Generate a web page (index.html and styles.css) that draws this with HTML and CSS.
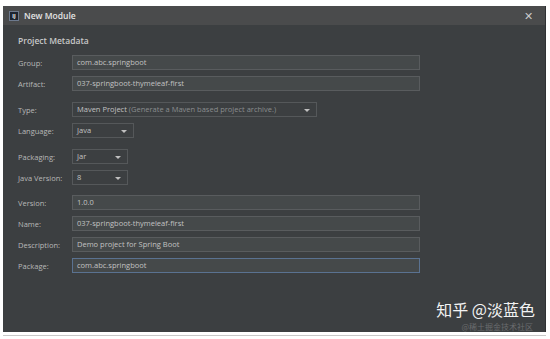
FILE: index.html
```html
<!DOCTYPE html>
<html lang="en">
<head>
    <meta charset="UTF-8">
    <title>New Module</title>
    <link rel="stylesheet" href="styles.css">
</head>
<body>
    <div class="dialog">
        <div class="titlebar">
            <span class="app-icon">IJ</span>
            <span class="title">New Module</span>
            <span class="close">&#x2715;</span>
        </div>
        <div class="content">
            <h2>Project Metadata</h2>
            <div class="row">
                <label>Group:</label>
                <div class="field wide">com.abc.springboot</div>
            </div>
            <div class="row">
                <label>Artifact:</label>
                <div class="field wide">037-springboot-thymeleaf-first</div>
            </div>
            <div class="row gap">
                <label>Type:</label>
                <div class="combo type">Maven Project <span class="hint">(Generate a Maven based project archive.)</span><span class="arrow"></span></div>
            </div>
            <div class="row">
                <label>Language:</label>
                <div class="combo lang">Java<span class="arrow"></span></div>
            </div>
            <div class="row gap">
                <label>Packaging:</label>
                <div class="combo small">Jar<span class="arrow"></span></div>
            </div>
            <div class="row">
                <label>Java Version:</label>
                <div class="combo small">8<span class="arrow"></span></div>
            </div>
            <div class="row gap tight">
                <label>Version:</label>
                <div class="field wide">1.0.0</div>
            </div>
            <div class="row">
                <label>Name:</label>
                <div class="field wide">037-springboot-thymeleaf-first</div>
            </div>
            <div class="row">
                <label>Description:</label>
                <div class="field wide">Demo project for Spring Boot</div>
            </div>
            <div class="row">
                <label>Package:</label>
                <div class="field wide focused">com.abc.springboot</div>
            </div>
        </div>
        <div class="watermark">
            <div class="zhihu">知乎 @淡蓝色</div>
            <div class="juejin">@稀土掘金技术社区</div>
        </div>
    </div>
    <div class="bottom-line"></div>
</body>
</html>
```

FILE: styles.css
```css
body {
    margin: 0;
    background: #ffffff;
    font-family: "Open Sans", "Liberation Sans", "Noto Sans CJK SC", sans-serif;
    width: 550px;
    height: 339px;
    overflow: hidden;
}
.dialog {
    position: relative;
    margin: 6px 0 0 3px;
    width: 543px;
    height: 326px;
    background: #3c3f41;
    border-right: 1px solid #2f3133;
    box-sizing: border-box;
}
.titlebar {
    height: 19px;
    background: #4a4b4c;
    display: flex;
    align-items: center;
    padding: 0 6px;
    color: #e4e4e4;
    font-size: 8.5px;
}
.app-icon {
    width: 10px;
    height: 10px;
    background: #1d2430;
    border: 1px solid #6d7a8e;
    box-sizing: border-box;
    color: #ffffff;
    font-size: 5px;
    font-weight: bold;
    line-height: 8px;
    text-align: center;
    margin-right: 5px;
}
.title {
    font-weight: 600;
    flex: 1;
}
.close {
    font-size: 11px;
    color: #c9c9c9;
    margin-right: 6px;
}
.content {
    padding: 0 0 0 15px;
}
.content h2 {
    margin: 0;
    padding: 10px 0 0;
    height: 24px;
    box-sizing: border-box;
    font-size: 8.5px;
    font-weight: 600;
    color: #c8c8c8;
}
.row {
    display: flex;
    align-items: center;
    height: 15px;
    margin-top: 6px;
    font-size: 7.5px;
    color: #b8b8b8;
}
.row.gap {
    margin-top: 11px;
}
.row.tight {
    margin-top: 10px;
}
.row label {
    width: 54px;
    flex: none;
}
.field, .combo {
    height: 15px;
    box-sizing: border-box;
    background: #45494a;
    border: 1px solid #595c5e;
    padding: 0 4px;
    line-height: 13px;
    color: #c2c2c2;
    white-space: nowrap;
    overflow: hidden;
}
.wide {
    width: 348px;
}
.focused {
    border-color: #5a7291;
}
.combo {
    position: relative;
    background: #3c3f41;
    border-color: #55585a;
    padding-right: 16px;
}
.type { width: 245px; }
.lang { width: 62px; }
.small { width: 56px; }
.hint {
    color: #8a8d8f;
}
.arrow {
    position: absolute;
    right: 6px;
    top: 6px;
    width: 0;
    height: 0;
    border-left: 3px solid transparent;
    border-right: 3px solid transparent;
    border-top: 3px solid #c0c0c0;
}
.watermark {
    position: absolute;
    right: 10px;
    bottom: 0;
    text-align: right;
}
.zhihu {
    font-family: "Noto Sans CJK SC", sans-serif;
    font-size: 16px;
    color: #f2f2f2;
    line-height: 23px;
}
.juejin {
    font-family: "Noto Sans CJK SC", sans-serif;
    font-size: 8px;
    color: #6a6c6e;
    line-height: 11px;
    margin-right: 2px;
}
.bottom-line {
    margin: 3px 0 0 3px;
    width: 543px;
    height: 1px;
    background: #c8c8c8;
}
```
